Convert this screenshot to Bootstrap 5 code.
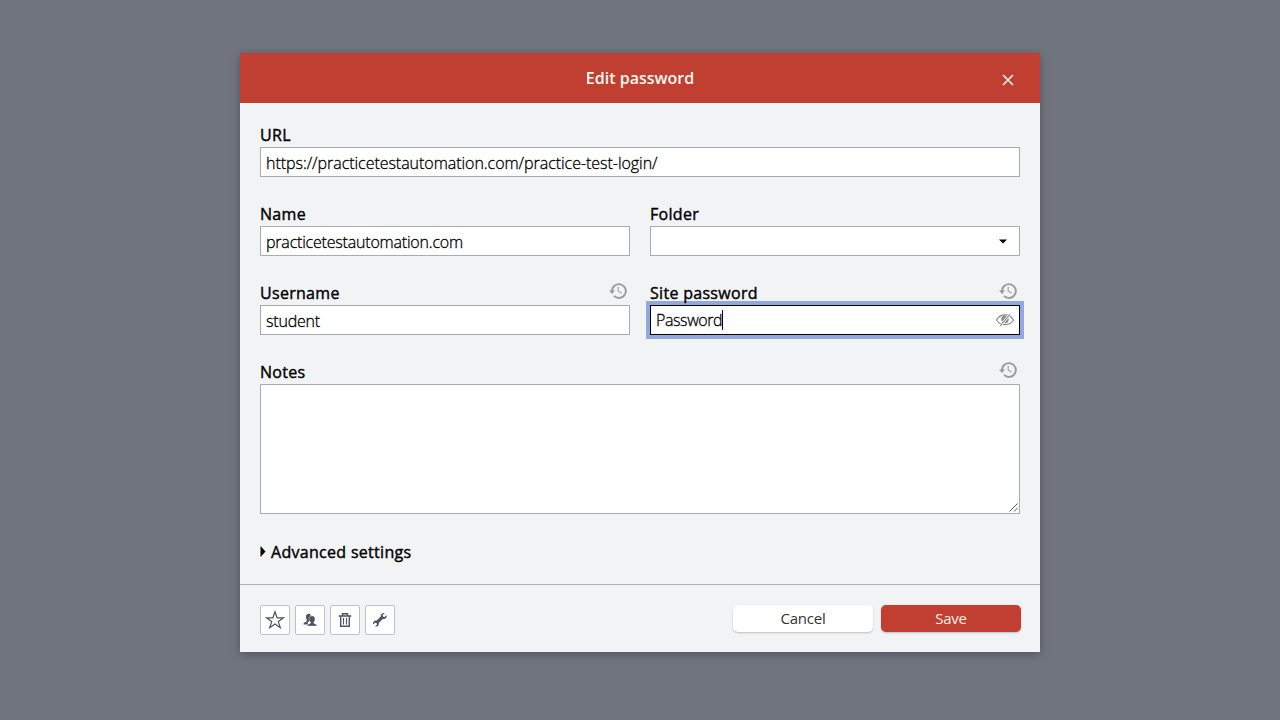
<!DOCTYPE html>
<html lang="en">
<head>
<meta charset="utf-8">
<title>Edit password</title>
<link href="https://cdn.jsdelivr.net/npm/bootstrap@5.3.0/dist/css/bootstrap.min.css" rel="stylesheet">
<style>
body{background:#70747f;font:400 16px/24px "Open Sans",sans-serif;color:#111;height:720px;overflow:hidden}
.dialog-box{width:800px;height:599px;margin:53px auto 0;background:#f2f3f5;box-shadow:0 2px 9px rgba(0,0,0,.28)}
.dialog-head{height:50px;background:#c03f30;color:#fff8f2;font-weight:600;font-size:16px}
.close-btn{right:25px;top:20px;width:14px;height:14px;line-height:0}
.dialog-main{height:481px;padding:20px 20px 0}
.field-label{display:flex;justify-content:space-between;height:24px;font-size:16px;line-height:24px;margin:0;color:#000}
.field-label span{-webkit-text-stroke:.4px currentColor;letter-spacing:.3px}
.field-label svg{margin:1px 3px 0 0}
.form-control{height:30px;padding:0 5px;border:1px solid #a9abb2;border-radius:0;background:#fff;color:#000;font-size:16px;line-height:30px;font-weight:300;white-space:nowrap;letter-spacing:-.2px}
.form-control span{-webkit-text-stroke:.3px currentColor}
.form-control.url-field{letter-spacing:-.04px}
.form-control.active-field{border-color:#000;box-shadow:0 0 0 4px #92a9e0;letter-spacing:-.4px}
.caret-line{width:1px;height:20px;background:#000}
.notes-area{height:130px}
.fields{row-gap:25px}
.dialog-foot{height:68px;border-top:1px solid #b0b2b7;padding:20px 19px 0 20px}
.tool-btn{width:30px;height:30px;background:#fff;border:1px solid #c0c2ca;border-radius:2px;padding:0;line-height:0;color:#4c5462}
.action-btn{width:140px;height:27px;border:0;border-radius:5px;padding:0;font-size:15px;line-height:27px;letter-spacing:-.2px;box-shadow:0 1px 2px rgba(0,0,0,.22)}
.cancel-btn,.cancel-btn:hover{background:#fff;color:#333}
.save-btn,.save-btn:hover{background:#c03f30;color:#fff1e9}
</style>
</head>
<body>
<svg width="0" height="0" class="position-absolute" aria-hidden="true">
<symbol id="history" viewBox="0 0 18 18"><path d="M3 9a6.9 6.9 0 1 1 2 4.900" fill="none" stroke="#999b9f" stroke-width="1.9"/><path d="M0 8.4h6L3.1 12z" fill="#999b9f"/><path d="M9.200 4.700V9l3.400 2.200" fill="none" stroke="#a2a4a8" stroke-width="1.2"/></symbol>
</svg>
<main class="dialog-box">
<header class="dialog-head position-relative d-flex align-items-center justify-content-center"><span>Edit password</span>
<a class="close-btn position-absolute" aria-label="Close"><svg width="14" height="14"><path d="M2 2l10 10M12 2L2 12" stroke="#ffefe3" stroke-width="1.7"/></svg></a></header>
<section class="dialog-main">
<div class="fields row gx-0" style="--bs-gutter-x:20px">
<div class="col-12"><div class="field-label"><span>URL</span></div><div class="form-control url-field"><span>https://practicetestautomation.com/practice-test-login/</span></div></div>
<div class="col-6"><div class="field-label"><span>Name</span></div><div class="form-control"><span>practicetestautomation.com</span></div></div>
<div class="col-6"><div class="field-label"><span>Folder</span></div><div class="form-control d-flex justify-content-end align-items-center pe-2"><svg width="16" height="8"><path d="M4 2.500h8L8 6.500z" fill="#000"/></svg></div></div>
<div class="col-6"><div class="field-label"><span>Username</span><svg width="18" height="18"><use href="#history"/></svg></div><div class="form-control"><span>student</span></div></div>
<div class="col-6"><div class="field-label"><span>Site password</span><svg width="18" height="18"><use href="#history"/></svg></div><div class="form-control active-field d-flex align-items-center"><span>Password</span><i class="caret-line"></i>
<svg class="ms-auto" width="18" height="16" viewBox="0 0 18 16" fill="none" stroke="#85878b"><path d="M.5 8C4.500 1.200 13.500 1.200 17.500 8 13.500 14.200 4.500 14.200.5 8z" stroke-width="1.1"/><circle cx="9" cy="7.500" r="3.700" fill="#85878b" stroke="none"/><path d="M4.200 13.800L14.200 2" stroke="#fff" stroke-width="2.600"/><path d="M4.200 13.800L14.200 2" stroke-width="1.1"/></svg></div></div>
<div class="col-12"><div class="field-label"><span>Notes</span><svg width="18" height="18"><use href="#history"/></svg></div><div class="form-control notes-area d-flex justify-content-end align-items-end p-0"><svg width="11" height="11"><path d="M1.500 9.500l8-8M6 9.500L9.500 6" stroke="#555" stroke-width="1" fill="none"/></svg></div></div>
</div>
<div class="field-label justify-content-start align-items-center" style="margin-top:26px"><svg class="m-0" width="11" height="12"><path d="M.5 0l5 5.500-5 5.500z" fill="#000"/></svg><span>Advanced settings</span></div>
</section>
<footer class="dialog-foot d-flex justify-content-between align-items-start">
<div class="d-flex" style="gap:5px">
<button class="tool-btn" aria-label="Favorite"><svg width="20" height="20"><path d="M10 1.700l2.100 6.100h6.400l-5.200 3.800 2 6.200L10 14l-5.300 3.800 2-6.200-5.200-3.800h6.400z" fill="none" stroke="currentColor" stroke-width="1.2"/></svg></button>
<button class="tool-btn" aria-label="Share"><svg width="14" height="14" fill="currentColor"><path d="M3 3.300C3 .2 7.500-.1 7.800 2.600 6.400 3.500 6.300 5.700 7.200 7.500L4.800 9.300v2.200H.5c0-2.500 1.800-2.100 3.200-3.300V6.600C3 5.800 3 4.500 3 3.300z"/><path d="M6 6c0-4.200 6-4.200 6 0 0 1.700-.6 2.400-1.200 3v1.200c1.200.8 3 .7 3 2.800H4.200c0-2.100 2.200-2 3.300-2.800V9C6.700 8.400 6 7.500 6 6z" stroke="#fff" stroke-width=".35"/></svg></button>
<button class="tool-btn" aria-label="Delete"><svg width="14" height="16" fill="none" stroke="currentColor"><path d="M.7 4h12.600M4.500 4V1.700h5V4M2.700 4v10.300h8.600V4" stroke-width="1.4"/><path d="M5.500 6v6.500M8.500 6v6.500" stroke-width="1.1"/></svg></button>
<button class="tool-btn" aria-label="Tools"><svg width="16" height="16" fill="currentColor"><path d="M14.500 3.200l-2 1.700-1.600-.5-.2-1.500 2.200-1.800C10.800.5 8.500 2 8.700 4.600L4.700 8.600C2.300 8.200.5 10.200 1.100 12.400L3 10.700l1.600.4.3 1.600L3 14.500c2.200.6 4.300-1.200 3.800-3.600l4-4c2.600.4 4.500-1.500 3.700-3.700z"/></svg></button>
</div>
<div class="d-flex gap-2"><button class="action-btn cancel-btn">Cancel</button><button class="action-btn save-btn">Save</button></div>
</footer>
</main>
<script src="https://cdn.jsdelivr.net/npm/bootstrap@5.3.0/dist/js/bootstrap.bundle.min.js"></script>
</body>
</html>
